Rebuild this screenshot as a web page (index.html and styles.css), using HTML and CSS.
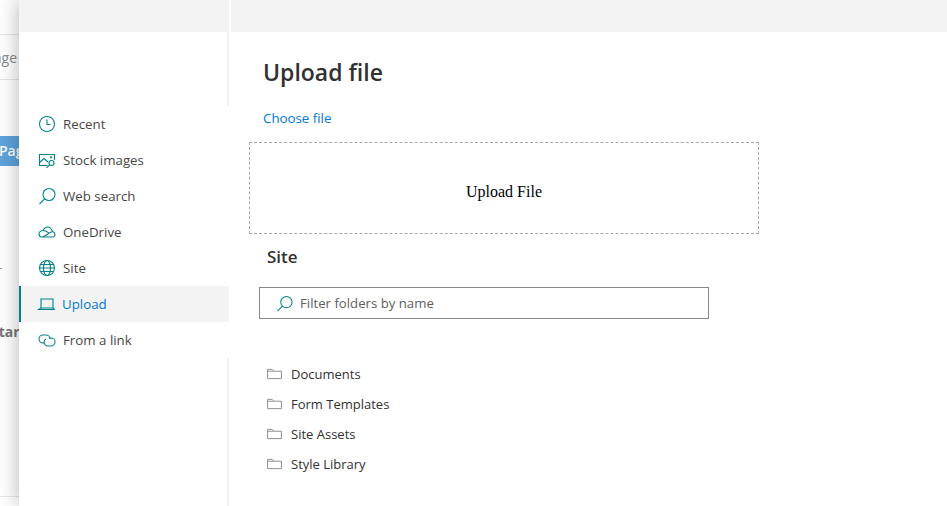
FILE: index.html
```html
<!DOCTYPE html>
<html>
<head>
<meta charset="utf-8">
<title>Upload file</title>
<link rel="stylesheet" href="styles.css">
</head>

<body>
	<div class="page">
		<div class="behind">
			<div class="behind-line behind-top"></div>
			<div class="behind-word">Image</div>
			<div class="behind-line"></div>
			<div class="behind-button"><span>Page</span></div>
			<div class="behind-dot"></div>
			<div class="behind-bold">Start</div>
			<div class="behind-line behind-bottom"></div>
		</div>
		<div class="panel">
			<div class="topbar">
				<div class="topbar-left"></div>
				<div class="topbar-right"></div>
			</div>
			<div class="columns">
				<div class="sidebar">
					<ul class="nav">
						<li class="nav-item">
							<svg class="nav-icon" viewBox="0 0 18 18"><circle cx="9" cy="9" r="7.5"/><path d="M9 4.500V9.500H12.500"/></svg>
							Recent
						</li>
						<li class="nav-item">
							<svg class="nav-icon" viewBox="0 0 18 18"><path d="M9.500 14.500H1.500V3.500H16.500V9"/><path d="M1.500 11.500L6 7.500L10 11"/><circle cx="13" cy="6.300" r=".6"/><circle cx="13.500" cy="12" r="2.500"/><path d="M11.700 13.800L8.500 16.800"/></svg>
							Stock images
						</li>
						<li class="nav-item">
							<svg class="nav-icon" viewBox="0 0 18 18"><circle cx="11" cy="7.500" r="6"/><path d="M6.800 11.700L1.500 17"/></svg>
							Web search
						</li>
						<li class="nav-item">
							<svg class="nav-icon" viewBox="0 0 18 18"><path d="M4 14H14.500C16 14 17 13 17 11.500C17 10 16 9 14.500 8.500C13.500 5.500 11.500 4 9.500 4C7.500 4 6 5.500 5 7.500C2.800 7.700 1 9.200 1 11C1 12.800 2.300 14 4 14Z"/><path d="M5 7.500C7.500 7.700 9.500 8.700 11 10.200L14.500 8.500M11 10.200L5 14"/></svg>
							OneDrive
						</li>
						<li class="nav-item">
							<svg class="nav-icon" viewBox="0 0 18 18"><circle cx="9" cy="9" r="7.500"/><ellipse cx="9" cy="9" rx="3.500" ry="7.500"/><path d="M1.500 9H16.500M2.500 5.500H15.500M2.500 12.500H15.500"/></svg>
							Site
						</li>
						<li class="nav-item nav-active">
							<svg class="nav-icon" viewBox="0 0 18 18"><path d="M4 13V4H16V13"/><path d="M1.500 14.500H17.500L16 13H4Z"/></svg>
							Upload
						</li>
						<li class="nav-item">
							<svg class="nav-icon" viewBox="0 0 18 18"><path d="M7 12H5A4 4 0 0 1 5 4H8A4 4 0 0 1 12 8"/><path d="M11 7H13A4 4 0 0 1 13 15H10A4 4 0 0 1 6 11C6 9.500 7 8.500 8 8"/></svg>
							From a link
						</li>
					</ul>
				</div>
				<div class="content">
					<h1 class="title">Upload file</h1>
					<a class="choose">Choose file</a>
					<div class="dropzone">Upload File</div>
					<h2 class="site-title">Site</h2>
					<div class="filter">
						<svg class="filter-icon" viewBox="0 0 18 18"><circle cx="11" cy="7.500" r="6"/><path d="M6.800 11.700L1.500 17"/></svg>
						<span>Filter folders by name</span>
					</div>
					<ul class="folders">
						<li class="folder"><svg class="folder-icon" viewBox="0 0 16 13"><path d="M.5 11.500V1.500H5.500L7.500 3.500H15.500V11.500Z"/><path d="M.5 3.500H7.500"/></svg>Documents</li>
						<li class="folder"><svg class="folder-icon" viewBox="0 0 16 13"><path d="M.5 11.500V1.500H5.500L7.500 3.500H15.500V11.500Z"/><path d="M.5 3.500H7.500"/></svg>Form Templates</li>
						<li class="folder"><svg class="folder-icon" viewBox="0 0 16 13"><path d="M.5 11.500V1.500H5.500L7.500 3.500H15.500V11.500Z"/><path d="M.5 3.500H7.500"/></svg>Site Assets</li>
						<li class="folder"><svg class="folder-icon" viewBox="0 0 16 13"><path d="M.5 11.500V1.500H5.500L7.500 3.500H15.500V11.500Z"/><path d="M.5 3.500H7.500"/></svg>Style Library</li>
					</ul>
				</div>
			</div>
		</div>
	</div>
</body>
</html>
```

FILE: styles.css
```css
html, body {
	margin: 0;
	height: 100%;
	overflow: hidden;
	background: #fff;
}
body {
	font-family: "Open Sans", "Noto Sans", sans-serif;
	font-size: 13px;
	color: #323130;
}
ul {
	list-style: none;
	margin: 0;
	padding: 0;
}
.page {
	display: flex;
	height: 506px;
}

/* the page that lies behind the panel */
.behind {
	width: 19px;
	flex: none;
	overflow: hidden;
	display: flex;
	flex-direction: column;
}
.behind-line {
	height: 1px;
	background: #e6e6e6;
	flex: none;
}
.behind-top {
	margin-top: 34px;
}
.behind-word {
	height: 44px;
	line-height: 46px;
	font-size: 14px;
	white-space: nowrap;
	display: flex;
	justify-content: flex-end;
	padding-right: 2px;
	color: #888;
}
.behind-button {
	margin-top: 56px;
	height: 30px;
	line-height: 30px;
	background: #5ea3dc;
	color: #fff;
	font-weight: 600;
	font-size: 14px;
	white-space: nowrap;
	flex: none;
}
.behind-button span {
	display: block;
	margin-left: -1px;
}
.behind-dot {
	margin-top: 102px;
	width: 2px;
	height: 1px;
	background: #999;
	flex: none;
}
.behind-bold {
	margin-top: 53px;
	margin-left: -9px;
	font-weight: 700;
	font-size: 14px;
	line-height: 20px;
	color: #777;
	white-space: nowrap;
}
.behind-bottom {
	margin-top: 154px;
}

/* panel */
.panel {
	flex: 1;
	min-width: 0;
	display: flex;
	flex-direction: column;
	background: #fff;
	box-shadow: 0 0 20px rgba(0, 0, 0, .3);
	position: relative;
}
.topbar {
	height: 32px;
	flex: none;
	display: flex;
	gap: 2px;
}
.topbar-left {
	width: 210px;
	background: #f3f3f3;
}
.topbar-right {
	flex: 1;
	background: #f3f3f3;
}
.columns {
	flex: 1;
	display: flex;
	min-height: 0;
}

/* left nav */
.sidebar {
	width: 210px;
	flex: none;
	box-sizing: border-box;
	padding-top: 74px;
	position: relative;
}
.sidebar::before {
	content: "";
	position: absolute;
	top: 0;
	bottom: 0;
	right: 0;
	width: 2px;
	background: #f3f3f3;
}
.nav {
	background: #fff;
	position: relative;
}
.nav-item {
	display: flex;
	align-items: center;
	gap: 7px;
	height: 36px;
	padding-left: 19px;
	font-size: 13.300px;
	color: #484644;
}
.nav-icon, .filter-icon {
	width: 18px;
	height: 18px;
	flex: none;
	fill: none;
	stroke: #038387;
	stroke-width: 1.100;
}
.nav-active {
	background: #f3f3f3;
	color: #0078d4;
	border-left: 2px solid #038387;
	padding-left: 16px;
}

/* right side */
.content {
	flex: 1;
	min-width: 0;
	padding-left: 20px;
	padding-top: 23px;
}
.title {
	margin: 0 0 0 14px;
	font-size: 23px;
	font-weight: 600;
	line-height: 34px;
}
.choose {
	display: block;
	margin: 19px 0 0 14px;
	font-size: 13.300px;
	line-height: 20px;
	color: #0078d4;
}
.dropzone {
	box-sizing: border-box;
	width: 510px;
	height: 92px;
	margin-top: 14px;
	padding-top: 8px;
	border: 1px dashed #a6a6a6;
	display: flex;
	align-items: center;
	justify-content: center;
	font-family: "Liberation Serif", serif;
	font-size: 16px;
	color: #000;
}
.site-title {
	margin: 11px 0 0 18px;
	font-size: 17px;
	font-weight: 600;
	line-height: 24px;
}
.filter {
	box-sizing: border-box;
	width: 450px;
	height: 32px;
	margin: 18px 0 0 10px;
	border: 1px solid #8a8886;
	display: flex;
	align-items: center;
	gap: 7px;
	padding-left: 16px;
	font-size: 13.200px;
	color: #605e5c;
}
.filter-icon {
	width: 17px;
	height: 17px;
}
.folders {
	margin: 40px 0 0 18px;
}
.folder {
	display: flex;
	align-items: center;
	gap: 9px;
	height: 30px;
	font-size: 13px;
}
.folder-icon {
	width: 15px;
	height: 12px;
	flex: none;
	fill: none;
	stroke: #8a8886;
	stroke-width: 1;
}
```
